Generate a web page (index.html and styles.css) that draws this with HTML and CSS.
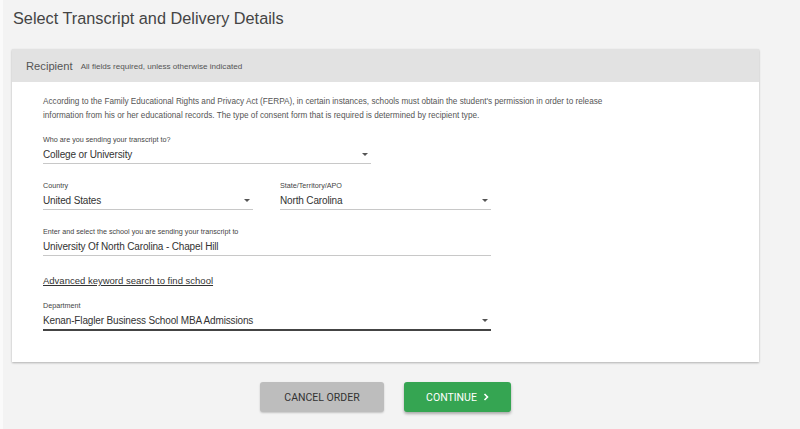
FILE: index.html
```html
<!DOCTYPE html>
<html>
<head>
<meta charset="utf-8">
<link rel="stylesheet" href="styles.css">
</head>
<body>
<div class="page">
  <h1 class="title">Select Transcript and Delivery Details</h1>
  <section class="card">
    <div class="card-head">
      <span class="head-title">Recipient</span>
      <span class="head-note">All fields required, unless otherwise indicated</span>
    </div>
    <div class="card-body">
      <p class="ferpa">According to the Family Educational Rights and Privacy Act (FERPA), in certain instances, schools must obtain the student's permission in order to release information from his or her educational records. The type of consent form that is required is determined by recipient type.</p>

      <div class="field w-recipient">
        <div class="label">Who are you sending your transcript to?</div>
        <div class="value">College or University<span class="caret"></span></div>
      </div>

      <div class="row">
        <div class="field w-half">
          <div class="label">Country</div>
          <div class="value">United States<span class="caret"></span></div>
        </div>
        <div class="field w-half2">
          <div class="label">State/Territory/APO</div>
          <div class="value">North Carolina<span class="caret"></span></div>
        </div>
      </div>

      <div class="field w-full spaced">
        <div class="label">Enter and select the school you are sending your transcript to</div>
        <div class="value">University Of North Carolina - Chapel Hill</div>
      </div>

      <a class="adv-link" href="#">Advanced keyword search to find school</a>

      <div class="field w-full dept">
        <div class="label">Department</div>
        <div class="value">Kenan-Flagler Business School MBA Admissions<span class="caret"></span></div>
      </div>
    </div>
  </section>
  <div class="actions">
    <button class="btn btn-cancel">CANCEL ORDER</button>
    <button class="btn btn-continue">CONTINUE
      <svg class="chev" width="6" height="8" viewBox="0 0 6 8"><path d="M1.5 1 L4.5 4 L1.5 7" fill="none" stroke="#fff" stroke-width="1.6"/></svg>
    </button>
  </div>
</div>
</body>
</html>
```
FILE: styles.css
```css
html, body {
  margin: 0;
  padding: 0;
  background: #f3f3f3;
}
body {
  font-family: "Liberation Sans", Arial, sans-serif;
  color: #444;
}
.page {
  width: 800px;
  height: 429px;
  overflow: hidden;
  border-left: 3px solid #fafafa;
  box-sizing: border-box;
}
.title {
  margin: 7px 0 0 10px;
  font-size: 16.3px;
  line-height: 22px;
  font-weight: normal;
  color: #444;
}
.card {
  margin: 20px 0 0 9px;
  width: 747px;
  background: #fff;
  box-shadow: 0 1px 2px rgba(0,0,0,0.28);
}
.card-head {
  height: 33px;
  background: #e2e2e2;
  display: flex;
  align-items: center;
  padding-left: 14px;
  gap: 8px;
}
.head-title {
  font-size: 11.2px;
  color: #555;
}
.head-note {
  font-size: 8.1px;
  color: #555;
  padding-top: 2px;
}
.card-body {
  padding: 13px 31px 31px 31px;
}
.ferpa {
  margin: 0;
  width: 572px;
  font-size: 8.2px;
  line-height: 14px;
  color: #555;
}
.field {
  margin-top: 11px;
}
.label {
  font-size: 7.2px;
  line-height: 12px;
  color: #444;
}
.value {
  position: relative;
  font-size: 10px;
  letter-spacing: -0.15px;
  line-height: 17px;
  color: #333;
  border-bottom: 1px solid #c8c8c8;
}
.caret {
  position: absolute;
  right: 3px;
  top: 7px;
  width: 0;
  height: 0;
  border-left: 3.5px solid transparent;
  border-right: 3.5px solid transparent;
  border-top: 3.5px solid #555;
}
.w-recipient { width: 328px; }
.row {
  display: flex;
  gap: 27px;
  margin-top: 16px;
}
.row .field { margin-top: 0; }
.w-half { width: 210px; }
.w-half2 { width: 211px; }
.w-full { width: 448px; }
.spaced { margin-top: 16px; }
.adv-link {
  display: block;
  margin-top: 18px;
  font-size: 9.5px;
  line-height: 14px;
  color: #333;
  text-decoration: underline;
  width: max-content;
}
.dept { margin-top: 12px; }
.dept .value {
  border-bottom: 2px solid #444;
}
.actions {
  margin-left: 9px;
  width: 747px;
  margin-top: 20px;
  display: flex;
  justify-content: center;
  gap: 20px;
}
.btn {
  height: 30px;
  border: none;
  border-radius: 3px;
  font-family: Roboto, "Liberation Sans", sans-serif;
  font-size: 10.5px;
  padding: 0;
  display: flex;
  align-items: center;
  justify-content: center;
  gap: 6px;
}
.btn-cancel {
  width: 124px;
  background: #bdbdbd;
  color: #333;
  box-shadow: 0 1px 2px rgba(0,0,0,0.2);
}
.btn-continue {
  width: 107px;
  background: #35a552;
  color: #fff;
  box-shadow: 0 2px 3px rgba(0,0,0,0.3);
}
.chev { display: block; }
```
